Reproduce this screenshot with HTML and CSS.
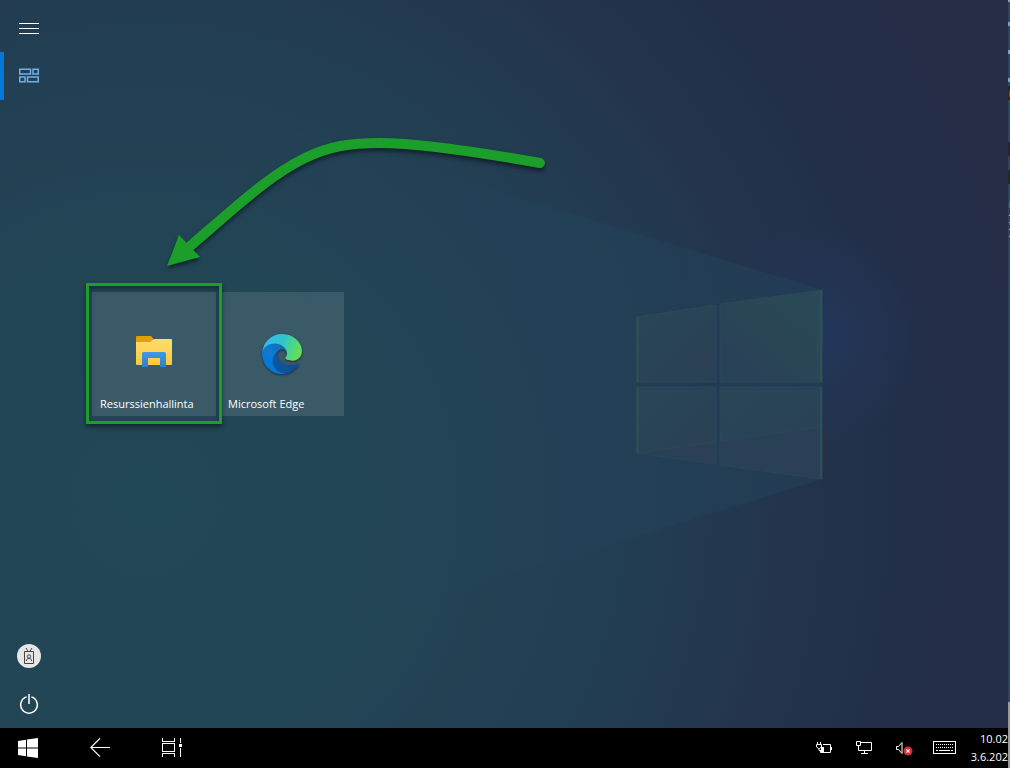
FILE: index.html
```html
<!DOCTYPE html>
<html lang="fi">
<head>
<meta charset="utf-8">
<meta name="viewport" content="width=device-width, initial-scale=1">
<title>Aloitus</title>
<link rel="stylesheet" href="styles.css">
</head>
<body>
<div class="screen">
  <svg class="wallpaper" viewBox="0 0 1010 768" preserveAspectRatio="none" aria-hidden="true">
    <defs>
      <radialGradient id="base" cx="150" cy="500" r="900" gradientUnits="userSpaceOnUse">
        <stop offset="0" stop-color="#224756"/>
        <stop offset=".25" stop-color="#224656"/>
        <stop offset=".5" stop-color="#223f53"/>
        <stop offset=".63" stop-color="#23394f"/>
        <stop offset=".75" stop-color="#23324b"/>
        <stop offset=".9" stop-color="#232d47"/>
        <stop offset="1" stop-color="#242c46"/>
      </radialGradient>
      <radialGradient id="glow" cx="815" cy="335" r="110" gradientUnits="userSpaceOnUse">
        <stop offset="0" stop-color="#23395f" stop-opacity=".9"/>
        <stop offset=".4" stop-color="#23375b" stop-opacity=".6"/>
        <stop offset="1" stop-color="#24365a" stop-opacity="0"/>
      </radialGradient>
      <linearGradient id="ray" x1="0" y1="0" x2="822" y2="0" gradientUnits="userSpaceOnUse">
        <stop offset=".2" stop-color="#224656" stop-opacity="0"/>
        <stop offset=".7" stop-color="#224258" stop-opacity=".6"/>
        <stop offset="1" stop-color="#234056" stop-opacity=".6"/>
      </linearGradient>
      <linearGradient id="pane" x1="0" y1="0" x2="1" y2="1">
        <stop offset="0" stop-color="#294657"/>
        <stop offset="1" stop-color="#2b4056"/>
      </linearGradient>
      <linearGradient id="paneGreen" x1=".4" y1="1" x2="1" y2=".4">
        <stop offset="0" stop-color="#2a4257"/>
        <stop offset="1" stop-color="#2a4956"/>
      </linearGradient>
    </defs>
    <rect width="1010" height="768" fill="url(#base)"/>
    <circle cx="815" cy="335" r="110" fill="url(#glow)"/>
    <path d="M0 40L822 290V479L560 560L0 710z" fill="url(#ray)"/>
    <path d="M637 317L822 290V479L637 453z" fill="#233b54"/>
    <g stroke="#2b4a56">
      <path d="M637 317L716 305V382H637z" fill="url(#pane)"/>
      <path d="M720 304L822 290V382H720z" fill="url(#paneGreen)"/>
      <path d="M637 387H716V464L637 453z" fill="url(#pane)"/>
      <path d="M720 387H822V479L720 465z" fill="url(#pane)"/>
    </g>
    <path d="M637 453L716 442V464zM720 441L822 427V479L720 465z" fill="#2b4056" opacity=".6"/>
    <path d="M637 453L716 442M720 441L822 427" stroke="#2a4a55"/>
    <path d="M637.500 317V382M637.500 387V453M821 290V382M821 387V479" fill="none" stroke="#2f5656" stroke-width="2" opacity=".7"/>
  </svg>

  <div class="start">
    <nav class="rail" aria-label="Aloitus">
      <button class="rail-button" aria-label="Valikko">
        <svg width="20" height="12" viewBox="0 -1 20 12" shape-rendering="crispEdges"><path d="M0 .5H20M0 5.5H20M0 10.5H20" stroke="#fff"/></svg>
      </button>
      <button class="rail-button rail-active" aria-label="Kiinnitetyt ruudut">
        <svg width="20" height="16" viewBox="0 0 20 16" fill="none" stroke="#6fb1e6" stroke-width="1.5"><path d="M.75 1.25H11.5V6H.75zM14 1.25H19.25V6H14zM.75 9H6V13.75H.75zM8.5 9H19.25V13.75H8.5z"/></svg>
      </button>
      <button class="rail-button rail-bottom" aria-label="Käyttäjä">
        <svg width="24" height="24" viewBox="0 0 24 24" fill="none" stroke="#444"><circle cx="12" cy="12" r="12" fill="#e6e6e6" stroke="none"/><path d="M7.5 7.5H16.5V19.5H7.5zM9 4L11.5 8M15 4L12.5 8"/><circle cx="12" cy="12.5" r="1.7"/><path d="M9.5 17V16C9.5 14 14.5 14 14.5 16V17"/></svg>
      </button>
      <button class="rail-button" aria-label="Virta">
        <svg width="20" height="20" viewBox="0 0 20 20" fill="none" stroke="#fff" stroke-width="1.5"><path d="M7.6 2.9A8.3 8.3 0 1 0 12.4 2.9M10 0V10"/></svg>
      </button>
    </nav>

    <main class="tiles">
      <button class="tile highlighted">
        <svg class="tile-icon" width="36" height="34" viewBox="0 0 36 34">
          <defs>
            <linearGradient id="folder" x2="0" y2="1"><stop stop-color="#ffdc70"/><stop offset="1" stop-color="#ffc938"/></linearGradient>
            <linearGradient id="stand" x2="0" y2="1"><stop stop-color="#3c9ae3"/><stop offset="1" stop-color="#2b83c9"/></linearGradient>
          </defs>
          <path d="M0 7V2Q0 1 1 1H15L17.5 4V7z" fill="#dfa000"/>
          <path d="M0 7H14L18 4H35Q36 4 36 5V29Q36 30 35 30H1Q0 30 0 29z" fill="url(#folder)"/>
          <path d="M6 32V18.500Q6 17 7.500 17H28.500Q30 17 30 18.500V32H24V23H12V32z" fill="url(#stand)"/>
        </svg>
        <span>Resurssienhallinta</span>
      </button>
      <button class="tile">
        <svg class="tile-icon edge-icon" width="40" height="44" viewBox="4 -22 257 283">
          <defs>
            <linearGradient id="eDark" x1="63" y1="178" x2="241" y2="178" gradientUnits="userSpaceOnUse"><stop stop-color="#0c59a4"/><stop offset="1" stop-color="#114a8b"/></linearGradient>
            <linearGradient id="eBlue" x1="157" y1="100" x2="46" y2="222" gradientUnits="userSpaceOnUse"><stop stop-color="#146eb5"/><stop offset=".55" stop-color="#0c7bd2"/><stop offset="1" stop-color="#0078d9"/></linearGradient>
            <linearGradient id="eGreen" x1="10" y1="60" x2="250" y2="150" gradientUnits="userSpaceOnUse"><stop stop-color="#35baf1"/><stop offset=".45" stop-color="#2dc5cb"/><stop offset=".75" stop-color="#51d780"/><stop offset="1" stop-color="#66e04d"/></linearGradient>
          </defs>
          <path fill="url(#eDark)" d="M235.680 195.460a93.730 93.730 0 0 1-10.540 4.710 101.870 101.870 0 0 1-35.900 6.460c-47.320 0-88.540-32.550-88.540-74.320A31.480 31.480 0 0 1 117.130 105c-42.800 1.800-53.800 46.400-53.800 72.530 0 73.880 68.090 81.370 82.760 81.370 7.910 0 19.840-2.300 27-4.560l1.310-.44a128.340 128.340 0 0 0 66.600-52.800 4 4 0 0 0-5.320-5.640z"/>
          <path fill="url(#eBlue)" d="M110.340 246.340A79.200 79.200 0 0 1 87.600 225a80.720 80.720 0 0 1 29.530-120c3.120-1.470 8.450-4.130 15.540-4a32.350 32.350 0 0 1 25.690 13 31.880 31.880 0 0 1 6.360 18.660c0-.21 24.460-79.600-80-79.600-43.900 0-80 41.660-80 78.210a130.150 130.150 0 0 0 12.110 56 128 128 0 0 0 156.380 67.110 75.550 75.550 0 0 1-62.780-8z"/>
          <path fill="url(#eGreen)" d="M156.940 153.780c-.81 1.050-3.300 2.500-3.300 5.660 0 2.610 1.700 5.120 4.720 7.230 14.380 10 41.490 8.680 41.560 8.680a59.560 59.560 0 0 0 30.270-8.350 61.380 61.380 0 0 0 30.430-52.880c.26-22.410-8-37.310-11.340-43.910C228.090 28.760 182.350 4.200 132.610 4.200a128 128 0 0 0-128 126.200c.48-36.540 36.800-66.050 80-66.050 3.500 0 23.460.34 42 10.070 16.340 8.580 24.900 18.940 30.850 29.210 6.180 10.670 7.280 24.150 7.280 29.520s-2.740 13.330-7.800 20.630z"/>
        </svg>
        <span>Microsoft Edge</span>
      </button>
    </main>
  </div>

  <footer class="taskbar">
    <button class="task start-button" aria-label="Käynnistä">
      <svg width="20" height="20" viewBox="0 0 20 20" fill="#fff"><path d="M0 3L8 1.800V9.400H0zM9 1.600L20 0V9.400H9zM0 10.400H8V18.200L0 17zM9 10.400H20V20L9 18.400z"/></svg>
    </button>
    <button class="task" aria-label="Takaisin">
      <svg width="20" height="20" viewBox="0 0 20 20" fill="none" stroke="#fff" stroke-width="1.200"><path d="M20 9.500H1M10 .3L.8 9.500L10 18.700"/></svg>
    </button>
    <button class="task" aria-label="Tehtävänäkymä">
      <svg width="20" height="20" viewBox="0 0 20 20" fill="none" stroke="#fff" shape-rendering="crispEdges"><path d="M.5 0V3.500H12.500V0M.5 5.500H12.500V13.500H.5zM.5 19V15.500H12.500V19M18.500 0V5M18.500 10V19"/><path d="M17 6H20V9H17z" fill="#fff" stroke="none"/></svg>
    </button>
    <div class="tray">
      <button class="tray-button" aria-label="Akku">
        <svg width="16" height="12" viewBox="0 0 16 12" fill="none" stroke="#fff"><path d="M1.500 0V2M4.500 0V2M.5 2.500H5.500V5L3.500 6.500H2.500L.5 5zM3 6.500V8.500H5M7 2.500H14.500V10.500H4.500V8M15.500 5V8"/><path d="M5 5H8V10H5z" fill="#fff" stroke="none"/></svg>
      </button>
      <button class="tray-button" aria-label="Verkko">
        <svg width="16" height="14" viewBox="0 0 16 14" fill="none" stroke="#fff"><path d="M.5 .5H4.500V4.500H.5zM2.500 4.500V9.500M5 1.500H15.500V9.500H2.500M8.500 9.500V12.500M5 12.500H12"/></svg>
      </button>
      <button class="tray-button" aria-label="Ääni mykistetty">
        <svg width="17" height="15" viewBox="0 0 17 15" fill="none"><path d="M.5 5.500H2.500L6 1.500V12.500L2.500 8.500H.5z" stroke="#fff"/><circle cx="12" cy="10" r="4.500" fill="#d92b35"/><path d="M10.300 8.300L13.700 11.700M13.700 8.300L10.300 11.700" stroke="#fff" stroke-width="1.200"/></svg>
      </button>
      <button class="tray-button" aria-label="Näppäimistö">
        <svg width="23" height="14" viewBox="0 0 23 14" fill="none" stroke="#fff" shape-rendering="crispEdges"><path d="M.5 .5H22.500V12.500H.5z"/><path d="M3 3.500H21M3 6.500H21" stroke-dasharray="1 1"/><path d="M3 9.500H5M6 9.500H17M18 9.500H20"/></svg>
      </button>
      <div class="clock"><time>10.02</time><span>3.6.202</span></div>
    </div>
  </footer>

  <svg class="arrow" width="400" height="150" viewBox="160 130 400 150" aria-hidden="true">
    <path d="M540 163Q427 143 380 143C350 143 330 146 305 158C268 176 235 208 188 248" fill="none" stroke="#1c9e2b" stroke-width="10" stroke-linecap="round"/>
    <path d="M167 266L179 235L200 257z" fill="#1c9e2b"/>
  </svg>

  <svg class="sliver" viewBox="0 0 2 768" preserveAspectRatio="none" aria-hidden="true">
    <path d="M0 0H2V768H0z" fill="#2a4663"/>
    <path d="M0 0H2V2H0zM0 702H2V768H0z" fill="#9b9b9b"/>
    <path d="M0 22H2V26H0zM0 50H2V54H0zM0 78H2V82H0z" fill="#6fa5cc"/>
    <path d="M0 86H2V100H0zM0 142H2V156H0zM0 170H2V184H0z" fill="#282827"/>
    <path d="M1 91H2V97H1z" fill="#a33"/>
    <path d="M1 202H2V208H1z" fill="#2d8178"/>
    <path d="M1 215H2V216H1zM1 222H2V223H1zM1 229H2V230H1zM1 236H2V237H1z" fill="#bcc8d2"/>
  </svg>
</div>
</body>
</html>
```
FILE: styles.css
```css
* {
  box-sizing: border-box;
}

body {
  margin: 0;
  background: #234454;
  color: #fff;
  font-family: "Open Sans", "Noto Sans", sans-serif;
  font-size: 11px;
  line-height: 16px;
}

button {
  margin: 0;
  padding: 0;
  border: 0;
  background: transparent;
  color: inherit;
  font: inherit;
}

svg {
  display: block;
}

.screen {
  position: relative;
  display: flex;
  flex-direction: column;
  min-height: 100vh;
  overflow: hidden;
}

.wallpaper {
  position: absolute;
  inset: 0;
  width: 100%;
  height: 100%;
}

.start {
  position: relative;
  flex: 1;
  display: flex;
}

.rail {
  display: flex;
  flex-direction: column;
  width: 58px;
  padding-top: 4px;
}

.rail-button {
  display: flex;
  align-items: center;
  justify-content: center;
  height: 48px;
}

.rail-active {
  background: linear-gradient(#0078d7, #0078d7) left / 4px 100% no-repeat;
}

.rail-bottom {
  margin-top: auto;
}

.tiles {
  flex: 1;
  display: flex;
  align-items: flex-start;
  gap: 4px;
  padding: 292px 16px 16px 34px;
}

.tile {
  display: flex;
  flex-direction: column;
  justify-content: flex-end;
  width: 124px;
  height: 124px;
  padding: 16px 8px 4px;
  background: rgba(255, 255, 255, 0.11);
  text-align: left;
}

.highlighted {
  position: relative;
  z-index: 1;
}

.highlighted::after {
  content: "";
  position: absolute;
  inset: -9px -6px -8px;
  border: 3px solid #1c9e2b;
  box-shadow: 0 3px 5px rgba(0, 0, 0, 0.45), inset 0 3px 5px rgba(0, 0, 0, 0.35);
}

.tile-icon {
  margin: auto;
}

.edge-icon {
  filter: drop-shadow(0 1px 1px rgba(0, 0, 0, 0.5));
}

.taskbar {
  position: relative;
  display: flex;
  height: 40px;
  background: #000;
}

.task {
  display: flex;
  align-items: center;
  justify-content: center;
  width: 72px;
}

.start-button {
  width: 56px;
  margin-right: 8px;
}

.tray {
  display: flex;
  align-items: center;
  margin-left: auto;
  padding-right: 2px;
}

.tray-button {
  display: flex;
  align-items: center;
  justify-content: center;
  width: 40px;
  height: 40px;
}

.clock {
  display: flex;
  flex-direction: column;
  width: 44px;
  align-items: flex-end;
  font-size: 11px;
  line-height: 18px;
}

.arrow {
  position: absolute;
  left: 160px;
  top: 130px;
  filter: drop-shadow(0 3px 2px rgba(0, 0, 0, 0.5));
}

.sliver {
  position: absolute;
  top: 0;
  right: 0;
  width: 2px;
  height: 100%;
}
```
